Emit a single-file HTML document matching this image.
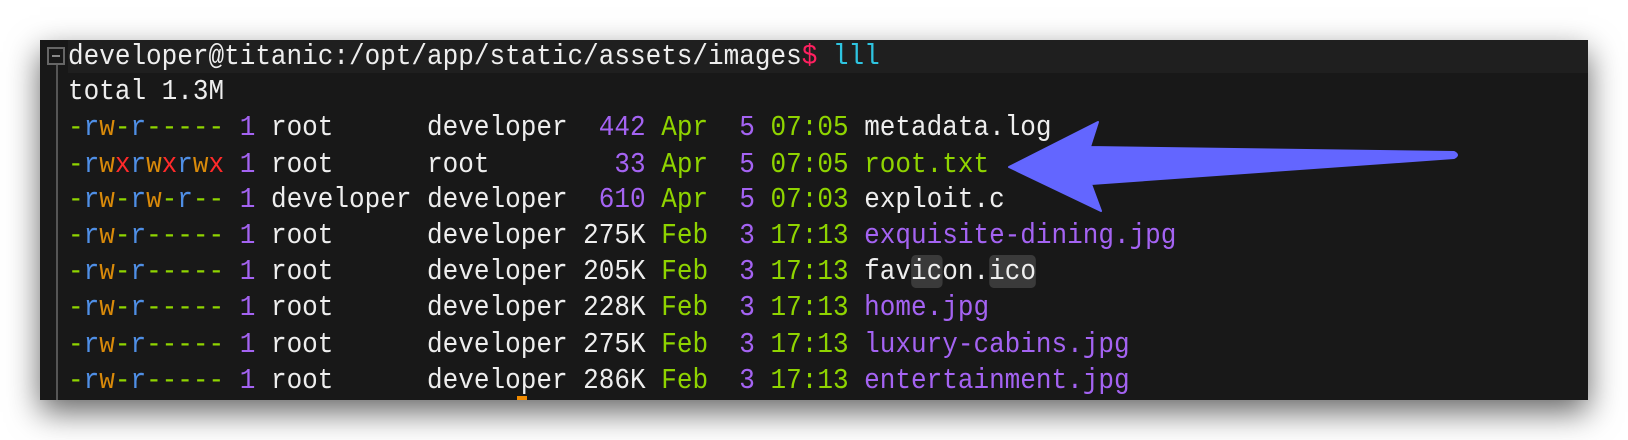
<!DOCTYPE html>
<html><head><meta charset="utf-8"><style>
html,body{margin:0;padding:0;background:#fff;width:1628px;height:440px;overflow:hidden}
.term{position:absolute;left:40px;top:40px;width:1548px;height:360px;background:#181818;box-shadow:0 12px 30px rgba(0,0,0,.6)}
.hdr{position:absolute;left:68px;top:40px;width:1520px;height:33px;background:#1f1f1f}
.vl{position:absolute;left:56px;top:64px;width:2px;height:336px;background:#555}
.box{position:absolute;left:47px;top:47px;width:14px;height:14px;border:2px solid #666}
.box:after{content:"";position:absolute;left:3px;top:6px;width:8px;height:2px;background:#888}
.l{position:absolute;left:68px;font:29px/36px "Liberation Mono",monospace;color:#eee;white-space:pre;transform:scaleX(0.897);transform-origin:0 0}
.g{color:#8fd400}.b{color:#4f8fe6}.o{color:#d98a0a}.r{color:#ff2a2a}.p{color:#a463f2}.c{color:#2ec4e0}.d{color:#ff2060}
.hl{background:#3a3a3a;border-radius:5px}
</style></head><body>
<div class="term"></div>
<div class="hdr"></div>
<div class="vl"></div>
<div class="box"></div>
<div class="l" style="top:39px">developer@titanic:/opt/app/static/assets/images<span class="d">$</span> <span class="c">lll</span></div>
<div class="l" style="top:74px">total 1.3M</div>
<div class="l" style="top:110px"><span class="g">-</span><span class="b">r</span><span class="o">w</span><span class="g">-</span><span class="b">r</span><span class="g">-----</span> <span class="p">1</span> root      developer  <span class="p">442</span> <span class="g">Apr</span>  <span class="p">5</span> <span class="g">07:05</span> metadata.log</div>
<div class="l" style="top:147px"><span class="g">-</span><span class="b">r</span><span class="o">w</span><span class="r">x</span><span class="b">r</span><span class="o">w</span><span class="r">x</span><span class="b">r</span><span class="o">w</span><span class="r">x</span> <span class="p">1</span> root      root        <span class="p">33</span> <span class="g">Apr</span>  <span class="p">5</span> <span class="g">07:05</span> <span class="g">root.txt</span></div>
<div class="l" style="top:182px"><span class="g">-</span><span class="b">r</span><span class="o">w</span><span class="g">-</span><span class="b">r</span><span class="o">w</span><span class="g">-</span><span class="b">r</span><span class="g">--</span> <span class="p">1</span> developer developer  <span class="p">610</span> <span class="g">Apr</span>  <span class="p">5</span> <span class="g">07:03</span> exploit.c</div>
<div class="l" style="top:218px"><span class="g">-</span><span class="b">r</span><span class="o">w</span><span class="g">-</span><span class="b">r</span><span class="g">-----</span> <span class="p">1</span> root      developer 275K <span class="g">Feb</span>  <span class="p">3</span> <span class="g">17:13</span> <span class="p">exquisite-dining.jpg</span></div>
<div class="l" style="top:254px"><span class="g">-</span><span class="b">r</span><span class="o">w</span><span class="g">-</span><span class="b">r</span><span class="g">-----</span> <span class="p">1</span> root      developer 205K <span class="g">Feb</span>  <span class="p">3</span> <span class="g">17:13</span> fav<span class="hl">ic</span>on.<span class="hl">ico</span></div>
<div class="l" style="top:290px"><span class="g">-</span><span class="b">r</span><span class="o">w</span><span class="g">-</span><span class="b">r</span><span class="g">-----</span> <span class="p">1</span> root      developer 228K <span class="g">Feb</span>  <span class="p">3</span> <span class="g">17:13</span> <span class="p">home.jpg</span></div>
<div class="l" style="top:327px"><span class="g">-</span><span class="b">r</span><span class="o">w</span><span class="g">-</span><span class="b">r</span><span class="g">-----</span> <span class="p">1</span> root      developer 275K <span class="g">Feb</span>  <span class="p">3</span> <span class="g">17:13</span> <span class="p">luxury-cabins.jpg</span></div>
<div class="l" style="top:363px"><span class="g">-</span><span class="b">r</span><span class="o">w</span><span class="g">-</span><span class="b">r</span><span class="g">-----</span> <span class="p">1</span> root      developer 286K <span class="g">Feb</span>  <span class="p">3</span> <span class="g">17:13</span> <span class="p">entertainment.jpg</span></div>
<div style="position:absolute;left:517px;top:396px;width:10px;height:4px;background:#f08a00"></div>
<svg style="position:absolute;left:0;top:0" width="1628" height="440">
<path d="M1009,167 L1098,122 L1090,147 L1454,152 Q1460,155 1454,158 L1091,184 L1101,211 Z" fill="#6366ff" stroke="#6366ff" stroke-width="2" stroke-linejoin="round"/>
</svg>
</body></html>
